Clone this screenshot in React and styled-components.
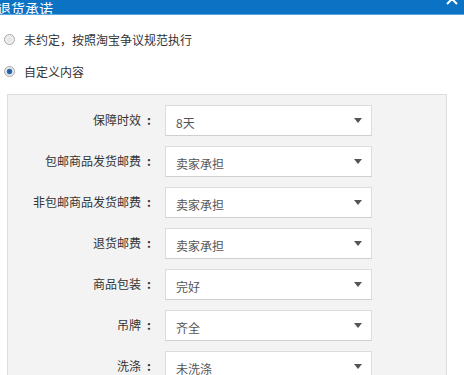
import React from "react";
import styled, { createGlobalStyle } from "styled-components";

const Global = createGlobalStyle`
  html, body {
    margin: 0;
    padding: 0;
    background: #ffffff;
    font-family: "Noto Sans CJK SC", "Liberation Sans", sans-serif;
    overflow: hidden;
  }
`;

const Dialog = styled.div`
  width: 464px;
  height: 375px;
  overflow: hidden;
  background: #fff;
`;

const Header = styled.div`
  display: flex;
  justify-content: space-between;
  align-items: flex-end;
  height: 14px;
  background: #0b72c4;
  border-bottom: 1px solid #5aa4dc;
  overflow: hidden;
`;

const Title = styled.span`
  margin-left: -3px;
  margin-bottom: -1px;
  font-size: 14px;
  line-height: 14px;
  color: #fff;
`;

const Close = styled.svg`
  margin-right: 6px;
  margin-bottom: 9px;
`;

const Body = styled.div`
  padding: 8px 17px 0 7px;
`;

const RadioRow = styled.label`
  display: flex;
  align-items: center;
  height: 32px;
  font-size: 12px;
  color: #333;
  gap: 9px;
`;

const Radio = styled.span`
  box-sizing: border-box;
  width: 11px;
  height: 11px;
  border-radius: 50%;
  margin-left: -3px;
  border: 1px solid #a8a8a8;
  background: ${p =>
    p.checked
      ? "radial-gradient(circle, #1a4f8c 0, #2a77c4 2.5px, #e8e8e8 3.2px, #f4f4f4 100%)"
      : "radial-gradient(circle, #e4e4e4 0, #f6f6f6 100%)"};
`;

const Panel = styled.div`
  margin-top: 7px;
  background: #f3f3f3;
  border: 1px solid #dddddd;
  padding: 10px 0 20px 0;
  display: flex;
  flex-direction: column;
  gap: 10px;
`;

const Row = styled.div`
  display: flex;
  align-items: center;
`;

const Label = styled.div`
  width: 144px;
  display: flex;
  justify-content: flex-end;
  align-items: baseline;
  font-size: 12px;
  color: #333;
  margin-top: -3px;
  margin-right: 13px;
  white-space: nowrap;
`;

const Colon = styled.span`
  width: 10px;
  text-align: right;
  font-weight: bold;
  padding-right: 1px;
`;

const Select = styled.div`
  box-sizing: border-box;
  width: 207px;
  height: 31px;
  background: #fff;
  border: 1px solid #dcdcdc;
  border-bottom-color: #cfcfcf;
  display: flex;
  align-items: center;
  justify-content: space-between;
  padding: 3px 9px 0 10px;
  font-size: 12px;
  color: #555;
`;

const Arrow = styled.span`
  width: 0;
  height: 0;
  border-left: 4.5px solid transparent;
  border-right: 4.5px solid transparent;
  border-top: 5px solid #555;
  margin-top: -4px;
`;

const rows = [
  ["保障时效", "8天"],
  ["包邮商品发货邮费", "卖家承担"],
  ["非包邮商品发货邮费", "卖家承担"],
  ["退货邮费", "卖家承担"],
  ["商品包装", "完好"],
  ["吊牌", "齐全"],
  ["洗涤", "未洗涤"],
];

export default function App() {
  return (
    <Dialog>
      <Global />
      <Header>
        <Title>退货承诺</Title>
        <Close width="12" height="12" viewBox="0 0 12 12">
          <path d="M1 1 L11 11 M11 1 L1 11" stroke="#fff" strokeWidth="2" />
        </Close>
      </Header>
      <Body>
        <RadioRow>
          <Radio />
          未约定，按照淘宝争议规范执行
        </RadioRow>
        <RadioRow>
          <Radio checked />
          自定义内容
        </RadioRow>
        <Panel>
          {rows.map(([label, value]) => (
            <Row key={label}>
              <Label>
                {label}
                <Colon>:</Colon>
              </Label>
              <Select>
                {value}
                <Arrow />
              </Select>
            </Row>
          ))}
        </Panel>
      </Body>
    </Dialog>
  );
}
